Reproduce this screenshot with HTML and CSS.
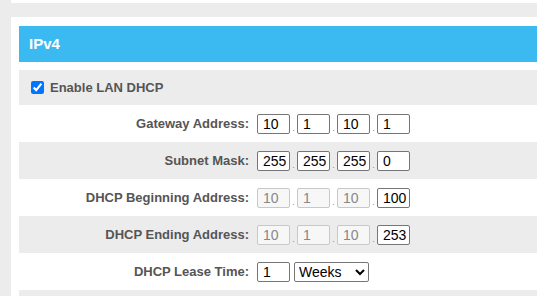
FILE: index.html
```html
<!DOCTYPE html>
<html lang="en">
<head>
  <meta charset="UTF-8">
  <title>LAN Settings</title>
  <link rel="stylesheet" href="styles.css">
</head>
<body>
  <!-- Previous card (bottom edge only) -->
  <div class="card card-prev"></div>

  <!-- IPv4 card -->
  <div class="card">
    <div class="card-header">IPv4</div>

    <div class="row row-grey row-check">
      <label class="check-label"><input type="checkbox" checked> Enable LAN DHCP</label>
    </div>

    <div class="row">
      <div class="row-label">Gateway Address:</div>
      <div class="ip">
        <input class="octet" type="text" value="10"><span class="dot">.</span>
        <input class="octet" type="text" value="1"><span class="dot">.</span>
        <input class="octet" type="text" value="10"><span class="dot">.</span>
        <input class="octet" type="text" value="1">
      </div>
    </div>

    <div class="row row-grey">
      <div class="row-label">Subnet Mask:</div>
      <div class="ip">
        <input class="octet" type="text" value="255"><span class="dot">.</span>
        <input class="octet" type="text" value="255"><span class="dot">.</span>
        <input class="octet" type="text" value="255"><span class="dot">.</span>
        <input class="octet" type="text" value="0">
      </div>
    </div>

    <div class="row">
      <div class="row-label">DHCP Beginning Address:</div>
      <div class="ip">
        <input class="octet" type="text" value="10" disabled><span class="dot">.</span>
        <input class="octet" type="text" value="1" disabled><span class="dot">.</span>
        <input class="octet" type="text" value="10" disabled><span class="dot">.</span>
        <input class="octet" type="text" value="100">
      </div>
    </div>

    <div class="row row-grey">
      <div class="row-label">DHCP Ending Address:</div>
      <div class="ip">
        <input class="octet" type="text" value="10" disabled><span class="dot">.</span>
        <input class="octet" type="text" value="1" disabled><span class="dot">.</span>
        <input class="octet" type="text" value="10" disabled><span class="dot">.</span>
        <input class="octet" type="text" value="253">
      </div>
    </div>

    <div class="row">
      <div class="row-label">DHCP Lease Time:</div>
      <div class="ip">
        <input class="octet" type="text" value="1">
        <select class="lease-unit">
          <option>Weeks</option>
          <option>Days</option>
          <option>Hours</option>
        </select>
      </div>
    </div>

    <div class="row row-grey"></div>
  </div>
</body>
</html>
```

FILE: styles.css
```css
body {
  margin: 0;
  padding: 0 0 0 11px;
  background: #ececec;
  font-family: "Liberation Sans", Arial, sans-serif;
  overflow: hidden;
}

.card {
  background: #fff;
  padding: 9px 0 0 8px;
}

.card-prev {
  height: 3px;
  padding: 0;
  margin-bottom: 14px;
}

.card-header {
  background: #3bbaf2;
  color: #fff;
  font-weight: bold;
  font-size: 15px;
  height: 36px;
  line-height: 36px;
  padding-left: 10px;
  margin-bottom: 8px;
}

.row {
  display: flex;
  align-items: center;
  height: 37px;
  font-size: 13px;
  font-weight: bold;
  color: #555;
}

.row-grey {
  background: #ececec;
}

.row-check {
  height: 35px;
  padding-left: 12px;
}

.check-label {
  display: flex;
  align-items: center;
  gap: 6px;
}

.check-label input {
  margin: 0;
  width: 13px;
  height: 13px;
}

.row-label {
  width: 230px;
  text-align: right;
  margin-right: 8px;
}

.ip {
  display: flex;
  align-items: center;
}

.octet {
  width: 33px;
  height: 20px;
  box-sizing: border-box;
  border: 1px solid #767676;
  border-radius: 2px;
  padding: 0 0 0 5px;
  font-family: "Liberation Sans", Arial, sans-serif;
  font-size: 14px;
  color: #000;
  background: #fff;
}

.octet:disabled {
  background: #f7f7f7;
  border-color: #c8c8c8;
  color: #888;
}

.dot {
  width: 7px;
  text-align: center;
  font-size: 9px;
  font-weight: normal;
  color: #b08060;
  align-self: flex-end;
  line-height: 12px;
}

.lease-unit {
  margin-left: 4px;
  width: 75px;
  height: 20px;
  font-family: "Liberation Sans", Arial, sans-serif;
  font-size: 14px;
  color: #000;
  border: 1px solid #767676;
  border-radius: 2px;
  background: #fff;
}
```
